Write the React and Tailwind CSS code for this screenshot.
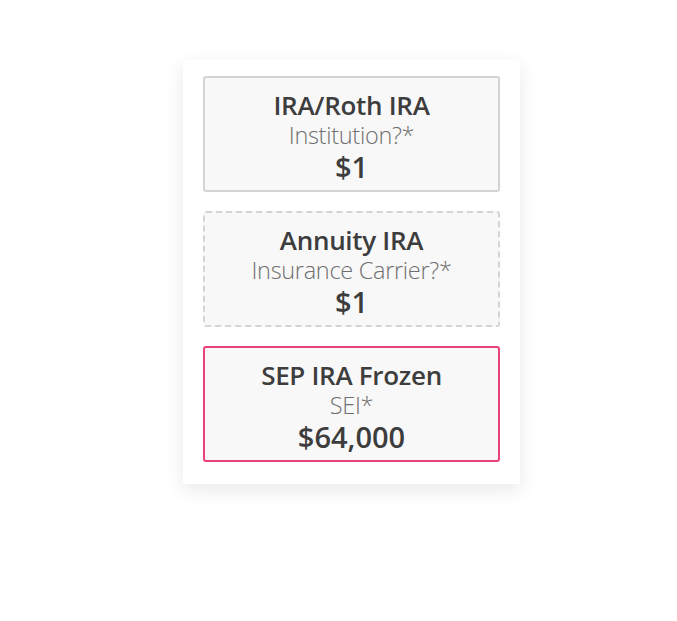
import React from 'react';

const accounts = [
  { name: 'IRA/Roth IRA', sub: 'Institution?*', amount: '$1', variant: 'solid' },
  { name: 'Annuity IRA', sub: 'Insurance Carrier?*', amount: '$1', variant: 'dashed' },
  { name: 'SEP IRA Frozen', sub: 'SEI*', amount: '$64,000', variant: 'active' },
];

function AccountCard({ name, sub, amount, variant }) {
  const border =
    variant === 'active'
      ? 'border-2 border-[#e8417c]'
      : variant === 'dashed'
      ? 'border-2 border-dashed border-[#d4d4d4]'
      : 'border-2 border-[#d4d4d4]';
  return (
    <div className={`h-[116px] rounded-[3px] bg-[#f8f8f8] flex flex-col items-center pt-[12px] text-center ${border}`}>
      <p className="text-[26px] leading-[30px] font-semibold text-[#3d3d3d] tracking-[-0.3px]">{name}</p>
      <p className="text-[23.5px] leading-[30px] font-light text-[#6f6f6f] tracking-[-0.3px]">{sub}</p>
      <p className="text-[29px] leading-[33px] font-semibold text-[#3d3d3d]">{amount}</p>
    </div>
  );
}

export default function App() {
  return (
    <div className="min-h-[621px] w-full bg-white pt-[60px] pl-[183px]" style={{ fontFamily: '"Open Sans", sans-serif' }}>
      <div className="w-[337px] bg-white px-[20px] pt-[16px] pb-[22px] flex flex-col gap-[19px] shadow-[0_6px_18px_rgba(0,0,0,0.09)]">
        {accounts.map((a) => (
          <AccountCard key={a.name} {...a} />
        ))}
      </div>
    </div>
  );
}
